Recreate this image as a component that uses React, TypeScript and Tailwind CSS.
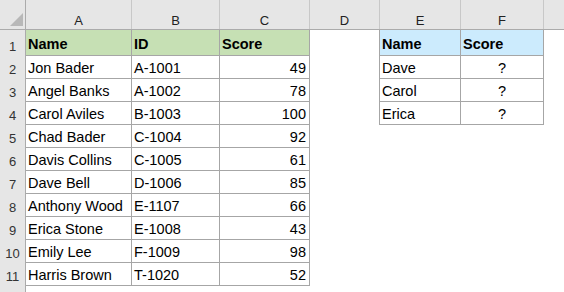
const font = { fontFamily: '"Liberation Sans", Arial, sans-serif' }

const left = [
  ['Jon Bader', 'A-1001', '49'],
  ['Angel Banks', 'A-1002', '78'],
  ['Carol Aviles', 'B-1003', '100'],
  ['Chad Bader', 'C-1004', '92'],
  ['Davis Collins', 'C-1005', '61'],
  ['Dave Bell', 'D-1006', '85'],
  ['Anthony Wood', 'E-1107', '66'],
  ['Erica Stone', 'E-1008', '43'],
  ['Emily Lee', 'F-1009', '98'],
  ['Harris Brown', 'T-1020', '52'],
]

const lookup = ['Dave', 'Carol', 'Erica']

function RowNum({ n }: { n: number }) {
  return (
    <div className="w-[26px] shrink-0 flex items-end justify-center pb-[3px] bg-[#e6e6e6] border-r border-[#ababab] text-[13px] font-normal text-[#333] leading-none">
      {n}
    </div>
  )
}

export default function App() {
  return (
    <div className="w-[564px] h-[292px] overflow-hidden bg-white text-black" style={font}>
      {/* column header */}
      <div className="flex h-[30px] bg-[#e6e6e6] border-b border-[#ababab] text-[13px] text-[#222] leading-none">
        <div className="w-[26px] shrink-0 border-r border-[#ababab] relative">
          <svg className="absolute left-[10px] top-[13px]" width="14" height="14" viewBox="0 0 14 14">
            <polygon points="13,0 13,13 0,13" fill="#b8b8b8" />
          </svg>
        </div>
        {[
          ['A', 'w-[106px]'],
          ['B', 'w-[88px]'],
          ['C', 'w-[90px]'],
          ['D', 'w-[70px]'],
          ['E', 'w-[81px]'],
          ['F', 'w-[83px]'],
        ].map(([l, w]) => (
          <div key={l} className={`${w} shrink-0 border-r border-[#c8c8c8] flex items-center justify-center pt-[11px]`}>
            {l}
          </div>
        ))}
        <div className="flex-1" />
      </div>

      {/* row 1 */}
      <div className="flex h-[26px] text-[14.5px] leading-none">
        <RowNum n={1} />
        <div className="w-[106px] shrink-0 bg-[#c6e0b4] border-r border-b border-[#a6a6a6] px-[2px] flex items-end pb-[4px] font-bold">Name</div>
        <div className="w-[88px] shrink-0 bg-[#c6e0b4] border-r border-b border-[#a6a6a6] px-[2px] flex items-end pb-[4px] font-bold">ID</div>
        <div className="w-[90px] shrink-0 bg-[#c6e0b4] border-r border-b border-[#a6a6a6] px-[2px] flex items-end pb-[4px] font-bold">Score</div>
        <div className="w-[70px] shrink-0 border-r border-[#a6a6a6]" />
        <div className="w-[81px] shrink-0 bg-[#ccebfd] border-r border-b border-[#a6a6a6] px-[2px] flex items-end pb-[4px] font-bold">Name</div>
        <div className="w-[83px] shrink-0 bg-[#ccebfd] border-r border-b border-[#a6a6a6] px-[2px] flex items-end pb-[4px] font-bold">Score</div>
      </div>

      {left.map((r, i) => {
        const e = lookup[i]
        return (
          <div key={i} className="flex h-[23px] text-[14.5px] leading-none">
            <RowNum n={i + 2} />
            <div className="w-[106px] shrink-0 border-r border-b border-[#a6a6a6] px-[2px] flex items-end pb-[3px] whitespace-nowrap">{r[0]}</div>
            <div className="w-[88px] shrink-0 border-r border-b border-[#a6a6a6] px-[2px] flex items-end pb-[3px]">{r[1]}</div>
            <div className="w-[90px] shrink-0 border-r border-b border-[#a6a6a6] px-[3px] flex items-end pb-[3px] justify-end">{r[2]}</div>
            {e ? (
              <>
                <div className="w-[70px] shrink-0 border-r border-[#a6a6a6]" />
                <div className="w-[81px] shrink-0 border-r border-b border-[#a6a6a6] px-[2px] flex items-end pb-[3px]">{e}</div>
                <div className="w-[83px] shrink-0 border-r border-b border-[#a6a6a6] px-[2px] flex items-end pb-[3px] justify-center">?</div>
              </>
            ) : null}
          </div>
        )
      })}

      <div className="flex h-[10px]">
        <div className="w-[26px] shrink-0 bg-[#e6e6e6] border-r border-[#ababab]" />
      </div>
    </div>
  )
}
